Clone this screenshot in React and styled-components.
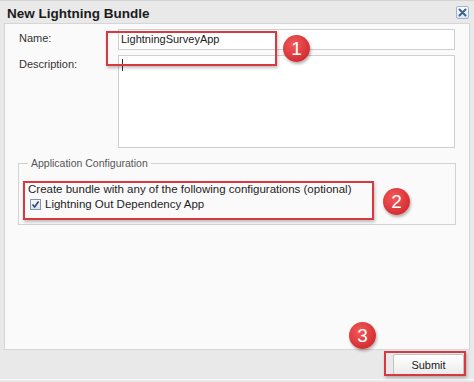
import React from "react";
import styled, { createGlobalStyle } from "styled-components";

const Global = createGlobalStyle`
  html, body { margin: 0; padding: 0; background: #e9e9e9; }
  * { box-sizing: border-box; }
`;

const Dialog = styled.div`
  position: relative;
  width: 474px;
  height: 382px;
  display: flex;
  flex-direction: column;
  background: #e9e9e9;
  padding-bottom: 2px;
  font-family: "Liberation Sans", Arial, sans-serif;
  font-size: 11px;
  color: #2a2a2a;
  overflow: hidden;
`;

const TitleBar = styled.div`
  height: 23px;
  flex: none;
  display: flex;
  align-items: center;
  justify-content: space-between;
  padding: 2px 4px 0 7px;
  border-top: 1px solid #d4d4d4;
`;

const Title = styled.div`
  font-weight: bold;
  font-size: 13.5px;
  color: #1b1b1b;
`;

const CloseBtn = styled.div`
  width: 13px;
  height: 13px;
  margin-right: 1px;
  margin-top: -1px;
  border: 1px solid #9fb4d2;
  border-radius: 2px;
  background: linear-gradient(#ffffff, #dde7f4);
  display: flex;
  align-items: center;
  justify-content: center;
`;

const Panel = styled.div`
  flex: 1;
  margin: 0 4px;
  background: #fbfafa;
  border: 1px solid #d6d6d6;
  padding: 5px 14px 0 14px;
`;

const FormGrid = styled.div`
  display: grid;
  grid-template-columns: 99px 1fr;
  row-gap: 5px;
`;

const Label = styled.label`
  padding-top: 3px;
  line-height: 13px;
  color: #333;
`;

const TextInput = styled.div`
  height: 21px;
  border: 1px solid #cfcfcf;
  background: #fff;
  padding: 0 0 0 2px;
  line-height: 19px;
  color: #222;
`;

const TextArea = styled.div`
  height: 93px;
  border: 1px solid #cfcfcf;
  background: #fff;
  padding: 3px 0 0 3px;
`;

const Caret = styled.div`
  width: 1px;
  height: 12px;
  background: #333;
`;

const Group = styled.fieldset`
  margin: 8px -1px 0 -1px;
  padding: 12px 9px 13px 9px;
  border: 1px solid #d3d3d3;
  border-radius: 0;
`;

const Legend = styled.legend`
  padding: 0 3px;
  font-size: 10.5px;
  line-height: 14px;
  color: #555;
`;

const Line = styled.div`
  font-size: 11.5px;
  line-height: 14px;
  color: #1e1e1e;
  display: flex;
  align-items: center;
  gap: ${(p) => p.$gap || 0}px;
  margin-top: ${(p) => p.$mt || 0}px;
`;

const Check = styled.span`
  width: 11px;
  height: 11px;
  margin-left: 2px;
  border: 1px solid #8396b4;
  background: linear-gradient(#f6f8fc, #dbe2ee);
  display: inline-flex;
  align-items: center;
  justify-content: center;
`;

const Footer = styled.div`
  height: 30px;
  flex: none;
  display: flex;
  justify-content: flex-end;
  padding: 4px 10px 0 0;
  border-bottom: 1px solid #fafafa;
`;

const Button = styled.button`
  width: 71px;
  height: 21px;
  border: 1px solid #c3c3c3;
  border-radius: 2px;
  background: linear-gradient(#ffffff, #ececec);
  font-family: "Liberation Sans", Arial, sans-serif;
  font-size: 11px;
  color: #222;
  padding: 0;
`;

const Callout = styled.div`
  position: absolute;
  border: 2px solid #d8383f;
  box-shadow: 1px 2px 3px rgba(0, 0, 0, 0.25);
  pointer-events: none;
`;

const Badge = styled.div`
  position: absolute;
  width: 27px;
  height: 27px;
  border-radius: 50%;
  background: radial-gradient(circle at 40% 35%, #f25a5a, #d62f33 70%);
  box-shadow: 1px 2px 3px rgba(0, 0, 0, 0.3);
  color: #fff;
  font-family: "Liberation Sans", Arial, sans-serif;
  font-size: 19px;
  display: flex;
  align-items: center;
  justify-content: center;
`;

export default function App() {
  return (
    <>
      <Global />
      <Dialog>
        <TitleBar>
          <Title>New Lightning Bundle</Title>
          <CloseBtn>
            <svg width="9" height="9" viewBox="0 0 9 9">
              <path d="M1.5 1.5 L7.5 7.5 M7.5 1.5 L1.5 7.5" stroke="#3d5f91" strokeWidth="2" strokeLinecap="round" />
            </svg>
          </CloseBtn>
        </TitleBar>
        <Panel>
          <FormGrid>
            <Label>Name:</Label>
            <TextInput>LightningSurveyApp</TextInput>
            <Label>Description:</Label>
            <TextArea>
              <Caret />
            </TextArea>
          </FormGrid>
          <Group>
            <Legend>Application Configuration</Legend>
            <Line>Create bundle with any of the following configurations (optional)</Line>
            <Line $gap={4} $mt={1}>
              <Check>
                <svg width="9" height="9" viewBox="0 0 9 9">
                  <path d="M1.5 4.5 L3.6 7 L7.6 1.5" stroke="#2e4a7a" strokeWidth="1.6" fill="none" />
                </svg>
              </Check>
              Lightning Out Dependency App
            </Line>
          </Group>
        </Panel>
        <Footer>
          <Button>Submit</Button>
        </Footer>

        <Callout style={{ left: 106, top: 31, width: 171, height: 35 }} />
        <Badge style={{ left: 283, top: 35 }}>1</Badge>
        <Callout style={{ left: 23, top: 181, width: 351, height: 39 }} />
        <Badge style={{ left: 383, top: 188 }}>2</Badge>
        <Callout style={{ left: 384, top: 351, width: 82, height: 25 }} />
        <Badge style={{ left: 349, top: 322 }}>3</Badge>
      </Dialog>
    </>
  );
}
